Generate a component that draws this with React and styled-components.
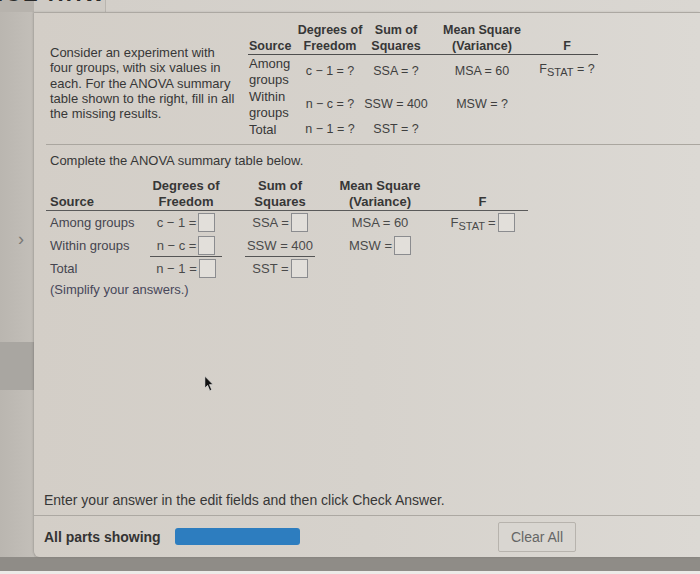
import React from 'react';
import styled, { createGlobalStyle } from 'styled-components';

const GlobalStyle = createGlobalStyle`
  html, body {
    margin: 0;
    padding: 0;
    background: #bcb8b2;
  }
  body {
    font-family: "Liberation Sans", Arial, sans-serif;
  }
`;

const introLines = [
  'Consider an experiment with',
  'four groups, with six values in',
  'each. For the ANOVA summary',
  'table shown to the right, fill in all',
  'the missing results.',
];

const Stat = () => (
  <StatText>
    F<Sub>STAT</Sub>
  </StatText>
);

const App = () => (
  <Page>
    <GlobalStyle />
    <TopBar>
      <TitleTab>
        <TitleText>ICE HHW</TitleText>
      </TitleTab>
      <TopRest />
    </TopBar>

    <Body>
      <Strip>
        <Chevron>›</Chevron>
        <StripBand />
      </Strip>

      <Panel>
        <Cursor viewBox="0 0 10 18" aria-hidden="true">
          <path d="M1 1 L1 14 L4 11 L6.5 17 L8.5 16 L6 10.2 L10 10.2 Z" fill="#111" stroke="#eee" strokeWidth="0.6" />
        </Cursor>

        <TopSection>
          <Intro>
            {introLines.map((line) => (
              <IntroLine key={line}>{line}</IntroLine>
            ))}
          </Intro>
          <Summary>
            <Head align="left">Source</Head>
            <Head>Degrees of<br />Freedom</Head>
            <Head>Sum of<br />Squares</Head>
            <Head>Mean Square<br />(Variance)</Head>
            <Head>F</Head>
            <Rule />

            <Label>Among<br />groups</Label>
            <Value>c − 1 = ?</Value>
            <Value>SSA = ?</Value>
            <Value>MSA = 60</Value>
            <Value lift>
              <Stat /> = ?
            </Value>

            <Label>Within<br />groups</Label>
            <Value>n − c = ?</Value>
            <Value>SSW = 400</Value>
            <Value>MSW = ?</Value>
            <Value />

            <Label>Total</Label>
            <Value>n − 1 = ?</Value>
            <Value>SST = ?</Value>
            <Value />
            <Value />
          </Summary>
        </TopSection>

        <AnswerSection>
          <Prompt>Complete the ANOVA summary table below.</Prompt>
          <AnswerGrid>
            <AnswerHead align="left">Source</AnswerHead>
            <AnswerHead>Degrees of<br />Freedom</AnswerHead>
            <AnswerHead>Sum of<br />Squares</AnswerHead>
            <AnswerHead>Mean Square<br />(Variance)</AnswerHead>
            <AnswerHead shift>F</AnswerHead>
            <AnswerRule />

            <RowLabel>Among groups</RowLabel>
            <Field>c − 1 =<Box /></Field>
            <Field>SSA =<Box /></Field>
            <Field>MSA = 60</Field>
            <Field shift>
              <Stat />
              <Eq>=</Eq>
              <Box />
            </Field>

            <RowLabel>Within groups</RowLabel>
            <Field>n − c =<Box /></Field>
            <Field>SSW = 400</Field>
            <Field>MSW =<Box /></Field>
            <Field />

            <RowLabel>Total</RowLabel>
            <Field sum>n − 1 =<Box /></Field>
            <Field sum>SST =<Box /></Field>
            <Field />
            <Field />
          </AnswerGrid>
          <Note>(Simplify your answers.)</Note>
        </AnswerSection>

        <Spacer />

        <Instruction>Enter your answer in the edit fields and then click Check Answer.</Instruction>
        <Footer>
          <PartsLabel>All parts showing</PartsLabel>
          <Progress />
          <ClearButton>Clear All</ClearButton>
        </Footer>
      </Panel>
    </Body>

    <BottomBand />
  </Page>
);

export default App;

const textColor = '#373737';

const Page = styled.div`
  width: 700px;
  height: 574px;
  display: flex;
  flex-direction: column;
  overflow: hidden;
  color: ${textColor};
`;

const TopBar = styled.div`
  height: 12px;
  display: flex;
  overflow: hidden;
  background: #d1cdc7;
`;

const TitleTab = styled.div`
  width: 105px;
  border-right: 1px solid #b9b5af;
  background: linear-gradient(90deg, #b7b3ad 0, #b7b3ad 34px, #cfcbc5 34px);
  overflow: hidden;
`;

const TitleText = styled.div`
  margin-top: -19px;
  margin-left: -3px;
  font-size: 22px;
  line-height: 26px;
  font-weight: bold;
  color: #2a2a2a;
  white-space: nowrap;
  letter-spacing: 2px;
`;

const TopRest = styled.div`
  flex: 1;
  background: linear-gradient(90deg, #d3cfc9, #dad7d2);
`;

const Body = styled.div`
  height: 545px;
  display: flex;
`;

const Strip = styled.div`
  width: 34px;
  display: flex;
  flex-direction: column;
  align-items: center;
  background: linear-gradient(90deg, #bab6b0, #c3bfb9);
`;

const Chevron = styled.div`
  margin-top: 218px;
  margin-left: 8px;
  font-size: 18px;
  line-height: 18px;
  color: #7a7874;
`;

const StripBand = styled.div`
  align-self: stretch;
  height: 48px;
  margin-top: 94px;
  background: #a9a6a1;
`;

const Panel = styled.div`
  position: relative;
  flex: 1;
  display: flex;
  flex-direction: column;
  border-top: 1px solid #aca8a2;
  border-bottom-left-radius: 6px;
  background: linear-gradient(90deg, #d3cec7 0%, #d6d2cc 50%, #dcd9d4 100%);
  box-shadow: -1px 0 2px rgba(0, 0, 0, 0.15);
`;

const Cursor = styled.svg`
  position: absolute;
  left: 170px;
  top: 362px;
  width: 9px;
  height: 17px;
`;

const TopSection = styled.div`
  display: flex;
  gap: 8px;
  margin-left: 12px;
  padding: 10px 0 5px 4px;
  border-bottom: 1px solid #aaa69f;
`;

const Intro = styled.div`
  width: 190px;
  margin-top: 22px;
  font-size: 13px;
  line-height: 15.3px;
`;

const IntroLine = styled.div`
  white-space: nowrap;
`;

const Summary = styled.div`
  display: grid;
  grid-template-columns: 48px 68px 64px 108px 62px;
  font-size: 12.5px;
  line-height: 15.5px;
`;

const Head = styled.div`
  align-self: end;
  font-weight: bold;
  white-space: nowrap;
  text-align: ${(props) => props.align || 'center'};
  padding-left: ${(props) => (props.align === 'left' ? '1px' : '0')};
`;

const Rule = styled.div`
  grid-column: 1 / -1;
  height: 1px;
  background: #4e4e4e;
`;

const Label = styled.div`
  padding: 1px 0 1px 1px;
  font-size: 13px;
  white-space: nowrap;
`;

const Value = styled.div`
  align-self: center;
  text-align: center;
  white-space: nowrap;
  color: #3f3f3f;
  margin-top: ${(props) => (props.lift ? '-4px' : '0')};
`;

const StatText = styled.span`
  display: inline-block;
  white-space: nowrap;
`;

const Sub = styled.sub`
  font-size: 11px;
  line-height: 0;
  vertical-align: -3px;
`;

const Eq = styled.span`
  margin-left: 3px;
`;

const AnswerSection = styled.div`
  margin-left: 12px;
  padding: 8px 0 0 4px;
`;

const Prompt = styled.div`
  font-size: 13px;
  line-height: 15px;
`;

const AnswerGrid = styled.div`
  display: grid;
  grid-template-columns: 77px 72px 70px 84px 83px;
  column-gap: 23px;
  margin: 10px 0 0 -4px;
  padding-left: 4px;
  font-size: 13px;
`;

const AnswerHead = styled.div`
  align-self: end;
  font-weight: bold;
  font-size: 13px;
  line-height: 16px;
  white-space: nowrap;
  text-align: ${(props) => props.align || 'center'};
  padding-right: ${(props) => (props.shift ? '8px' : '0')};
`;

const AnswerRule = styled.div`
  grid-column: 1 / -1;
  height: 1px;
  margin-left: -4px;
  background: #5a5a5a;
`;

const RowLabel = styled.div`
  height: 23px;
  display: flex;
  align-items: center;
  white-space: nowrap;
  color: #45454f;
`;

const Field = styled.div`
  height: 23px;
  display: flex;
  align-items: center;
  justify-content: center;
  white-space: nowrap;
  color: #4a4a4a;
  border-top: ${(props) => (props.sum ? '1px solid #555' : '0')};
  margin-top: ${(props) => (props.sum ? '-1px' : '0')};
  padding-right: ${(props) => (props.shift ? '8px' : '0')};
`;

const Box = styled.span`
  display: inline-block;
  width: 15px;
  height: 17px;
  margin-left: 2px;
  border: 1px solid #8b8c8f;
  background: #e2dfda;
`;

const Note = styled.div`
  margin-top: 2px;
  font-size: 13px;
  line-height: 15px;
  color: #47475a;
`;

const Spacer = styled.div`
  flex: 1;
`;

const Instruction = styled.div`
  padding: 0 0 7px 10px;
  font-size: 14px;
  line-height: 16px;
  border-bottom: 1px solid #aca8a2;
`;

const Footer = styled.div`
  height: 41px;
  display: flex;
  align-items: center;
  padding-left: 10px;
`;

const PartsLabel = styled.span`
  font-size: 14px;
  font-weight: bold;
  color: #333;
`;

const Progress = styled.div`
  width: 125px;
  height: 17px;
  margin-left: 14px;
  border-radius: 3px;
  background: #2d7dbf;
`;

const ClearButton = styled.button`
  width: 78px;
  height: 30px;
  margin: 0 124px 0 auto;
  border: 1px solid #b7b3ad;
  border-radius: 2px;
  background: #d9d6d1;
  color: #666;
  font-family: "Liberation Sans", Arial, sans-serif;
  font-size: 14px;
`;

const BottomBand = styled.div`
  flex: 1;
  background: linear-gradient(180deg, #8f8c87 0, #8f8c87 14px, #ecebe8 14px);
`;
